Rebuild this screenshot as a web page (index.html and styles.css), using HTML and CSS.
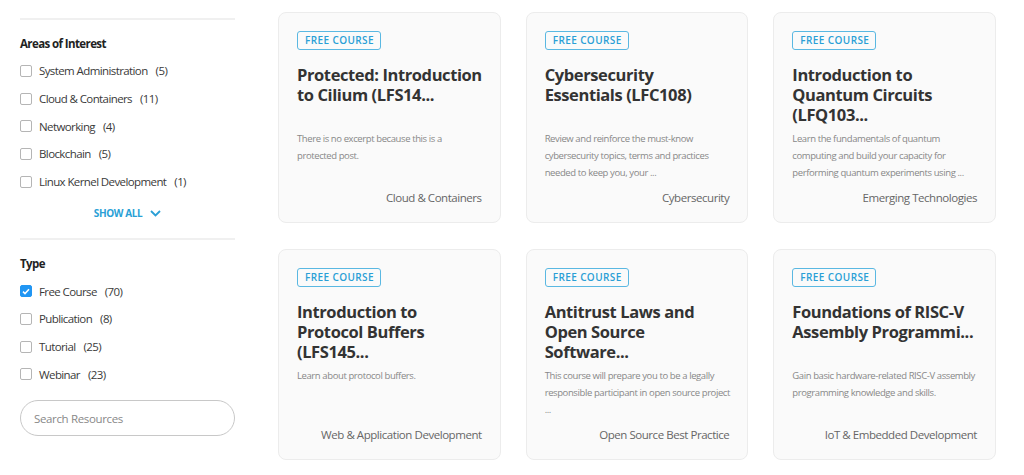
FILE: index.html
```html
<!DOCTYPE html>
<html>
<head>
<meta charset="utf-8">
<link rel="stylesheet" href="styles.css">
</head>
<body>
<div class="page">
  <aside class="sidebar">
    <div class="divider"></div>
    <div class="group">
      <h3 class="group-title">Areas of Interest</h3>
      <label class="opt"><span class="box"></span><span class="name">System Administration</span><span class="count">(5)</span></label>
      <label class="opt"><span class="box"></span><span class="name">Cloud &amp; Containers</span><span class="count">(11)</span></label>
      <label class="opt"><span class="box"></span><span class="name">Networking</span><span class="count">(4)</span></label>
      <label class="opt"><span class="box"></span><span class="name">Blockchain</span><span class="count">(5)</span></label>
      <label class="opt"><span class="box"></span><span class="name">Linux Kernel Development</span><span class="count">(1)</span></label>
      <div class="show-all">SHOW ALL <svg width="11" height="7" viewBox="0 0 11 7"><path d="M1 1l4.5 4.5L10 1" fill="none" stroke="#2a9fd6" stroke-width="1.8"/></svg></div>
    </div>
    <div class="divider"></div>
    <div class="group">
      <h3 class="group-title">Type</h3>
      <label class="opt"><span class="box checked"><svg width="8" height="7" viewBox="0 0 8 7"><path d="M1 3.6l2 2L7 1.2" fill="none" stroke="#fff" stroke-width="1.5"/></svg></span><span class="name">Free Course</span><span class="count">(70)</span></label>
      <label class="opt"><span class="box"></span><span class="name">Publication</span><span class="count">(8)</span></label>
      <label class="opt"><span class="box"></span><span class="name">Tutorial</span><span class="count">(25)</span></label>
      <label class="opt"><span class="box"></span><span class="name">Webinar</span><span class="count">(23)</span></label>
    </div>
    <div class="search">Search Resources</div>
  </aside>
  <main class="grid">
    <article class="card">
      <span class="badge">FREE COURSE</span>
      <h2 class="title">Protected: Introduction to Cilium (LFS14...</h2>
      <p class="excerpt">There is no excerpt because this is a protected&nbsp;post.</p>
      <div class="cat">Cloud &amp; Containers</div>
    </article>
    <article class="card">
      <span class="badge">FREE COURSE</span>
      <h2 class="title">Cybersecurity Essentials (LFC108)</h2>
      <p class="excerpt">Review and reinforce the must-know cybersecurity topics, terms and practices needed to keep you, your ...</p>
      <div class="cat">Cybersecurity</div>
    </article>
    <article class="card">
      <span class="badge">FREE COURSE</span>
      <h2 class="title">Introduction to Quantum Circuits (LFQ103...</h2>
      <p class="excerpt">Learn the fundamentals of quantum computing and build your capacity for performing quantum experiments using ...</p>
      <div class="cat">Emerging Technologies</div>
    </article>
    <article class="card">
      <span class="badge">FREE COURSE</span>
      <h2 class="title">Introduction to Protocol Buffers (LFS145...</h2>
      <p class="excerpt">Learn about protocol buffers.</p>
      <div class="cat">Web &amp; Application Development</div>
    </article>
    <article class="card">
      <span class="badge">FREE COURSE</span>
      <h2 class="title">Antitrust Laws and Open Source<br>Software...</h2>
      <p class="excerpt">This course will prepare you to be a legally responsible participant in open source project ...</p>
      <div class="cat">Open Source Best Practice</div>
    </article>
    <article class="card">
      <span class="badge">FREE COURSE</span>
      <h2 class="title">Foundations of RISC-V Assembly Programmi...</h2>
      <p class="excerpt">Gain basic hardware-related RISC-V assembly programming knowledge and skills.</p>
      <div class="cat">IoT &amp; Embedded Development</div>
    </article>
  </main>
</div>
</body>
</html>
```
FILE: styles.css
```css
* { box-sizing: border-box; }
body {
  margin: 0;
  background: #fff;
  font-family: "Open Sans", "Liberation Sans", sans-serif;
  color: #333;
}
.page {
  display: flex;
  align-items: flex-start;
  padding-left: 20px;
  gap: 43px;
}
.sidebar {
  width: 215px;
  flex: none;
  padding-top: 18px;
}
.divider {
  height: 2px;
  background: #f0f0f0;
}
.group {
  padding-top: 14px;
}
.group-title {
  margin: 0;
  height: 23px;
  font-size: 11.5px;
  font-weight: 700;
  letter-spacing: -0.6px;
  color: #222;
  line-height: 20px;
}
.opt {
  display: flex;
  align-items: center;
  height: 27.7px;
  font-size: 11.5px;
  letter-spacing: -0.6px;
  color: #3a3a3a;
}
.box {
  width: 12px;
  height: 12px;
  border: 1px solid #b5b5b5;
  border-radius: 2px;
  margin-right: 7px;
  display: flex;
  align-items: center;
  justify-content: center;
  background: #fff;
  flex: none;
}
.box.checked {
  background: #2196f3;
  border-color: #2196f3;
}
.name { margin-right: 8px; }
.show-all {
  display: flex;
  align-items: center;
  justify-content: center;
  gap: 8px;
  height: 34px;
  margin-top: 1px;
  margin-bottom: 8px;
  font-size: 10px;
  font-weight: 700;
  color: #2a9fd6;
  letter-spacing: -0.4px;
}
.search {
  margin-top: 12px;
  height: 36px;
  border: 1px solid #c8c8c8;
  border-radius: 18px;
  padding-left: 13px;
  display: flex;
  align-items: center;
  font-size: 11.5px;
  letter-spacing: -0.35px;
  color: #888;
}
.grid {
  margin-top: 12px;
  width: 718px;
  display: grid;
  grid-template-columns: repeat(3, 1fr);
  column-gap: 25px;
  row-gap: 26px;
}
.card {
  height: 211px;
  background: #fafafa;
  border: 1px solid #ececec;
  border-radius: 8px;
  padding: 18px 18px 17px 18px;
  display: flex;
  flex-direction: column;
  align-items: flex-start;
}
.badge {
  height: 19px;
  padding: 0 6px 0 7px;
  border: 1px solid #5ab8e2;
  border-radius: 3px;
  font-size: 10px;
  font-weight: 600;
  letter-spacing: 0.4px;
  color: #2a9fd6;
  line-height: 17px;
}
.title {
  margin: 15px -4px 0 0;
  height: 60px;
  font-size: 16.5px;
  line-height: 20px;
  font-weight: 700;
  letter-spacing: -0.4px;
  color: #333;
}
.excerpt {
  margin: 5px -4px 0 0;
  font-size: 9.5px;
  line-height: 17px;
  letter-spacing: -0.4px;
  color: #888;
}
.cat {
  margin-top: auto;
  align-self: flex-end;
  font-size: 11.5px;
  letter-spacing: -0.45px;
  color: #666;
}
```
